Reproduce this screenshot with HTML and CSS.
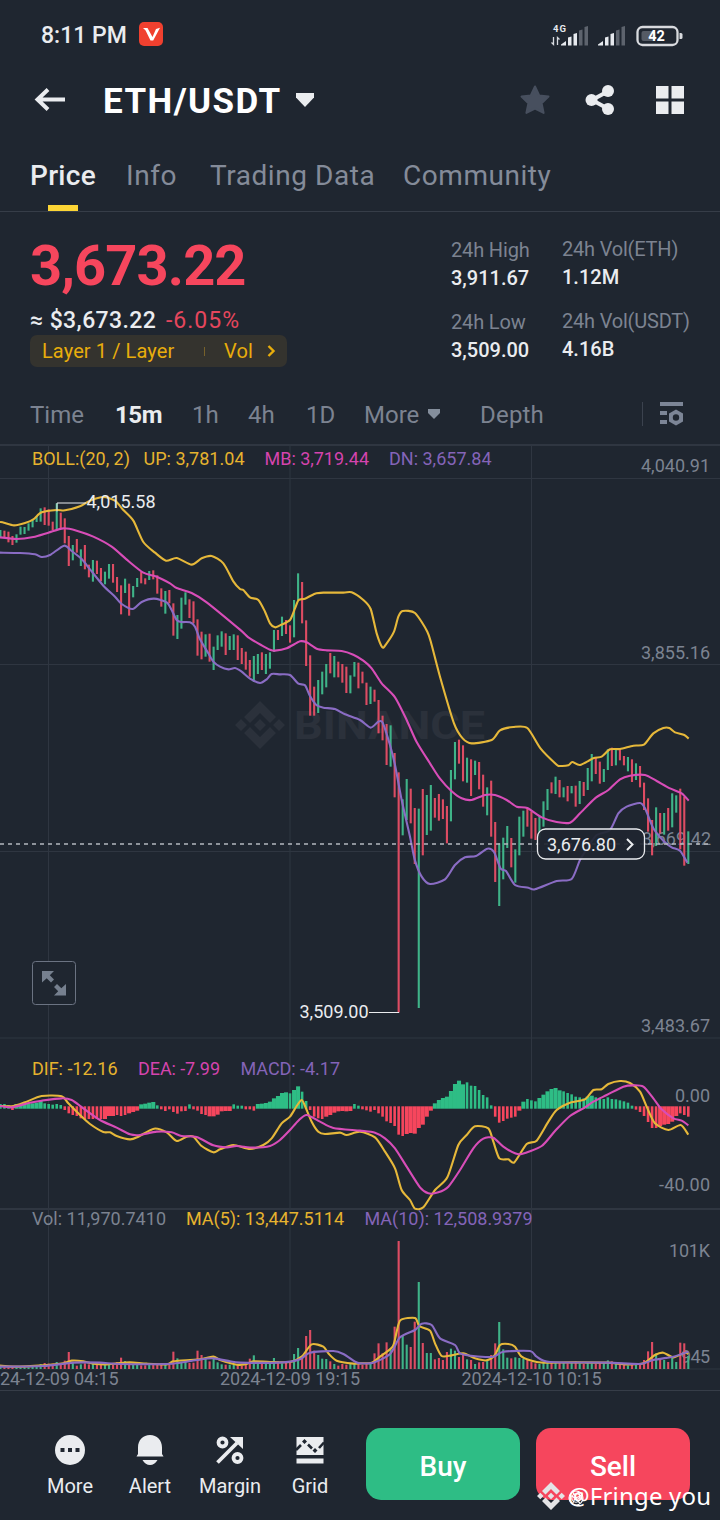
FILE: index.html
```html
<!DOCTYPE html>
<html lang="en">
<head>
    <meta charset="UTF-8">
    <meta name="viewport" content="width=device-width, initial-scale=1.0">
    <title>ETH/USDT</title>
    <link rel="stylesheet" href="styles.css">
</head>
<body>
    <div class="status-bar">
        <span class="clock">8:11 PM</span>
        <svg class="app-badge" width="24" height="24" viewBox="0 0 24 24"><rect width="24" height="24" rx="5" fill="#f0402f"/><path d="M4 6h4.500l5 9L17 7l4-1.300-6.800 12.800h-2.700L6.600 8.500z" fill="#fff"/></svg>
        <svg class="signals" width="136" height="28" viewBox="550 20 136 28">
            <text x="553" y="30.500" font-size="9.500" font-weight="700" fill="#e6e9ee" textLength="13">4G</text>
            <path d="M553.500 36v7.500l-2-2M557.500 44v-7.500l2 2" fill="none" stroke="#d8dbe0" stroke-width="1.300"/>
            <g fill="#e6e9ee"><path d="M561 44.500v-1l5-3.500v4.500zM568 36.500l3.500-1v9H568zM573.500 33l3.500-1v12.500h-3.500z"/><path d="M598 44.500v-1l5-3.500v4.500zM605 36.500l3.500-1v9H605zM610.500 33l3.500-1v12.500h-3.500z"/></g>
            <g fill="#5d636d"><path d="M579 29.500l3.500-1v16H579zM584.500 26l3.500-1v19.500h-3.500z"/><path d="M616 29.500l3.500-1v16H616zM621.500 26l3.500-1v19.500h-3.500z"/></g>
            <rect x="637.500" y="26" width="40" height="18" rx="5" fill="none" stroke="#d8dade" stroke-width="2.300"/>
            <rect x="641.500" y="30" width="14" height="10" rx="2" fill="#555b65"/>
            <path d="M679.500 32h1.500a1.500 1.500 0 0 1 1.500 1.500v3a1.500 1.500 0 0 1-1.500 1.500h-1.500z" fill="#d8dade"/>
            <text x="656.500" y="40" font-size="14.500" font-weight="700" fill="#fff" text-anchor="middle">42</text>
        </svg>
    </div>

    <header class="title-bar">
        <svg class="back" width="32" height="26" viewBox="0 0 32 26"><path d="M14 2.500L3.500 12.500 14 22.500M3 12.500h28" fill="none" stroke="#eaecef" stroke-width="4"/></svg>
        <h1>ETH/USDT</h1>
        <svg class="caret" width="20" height="14" viewBox="0 0 20 14"><path d="M1 0h18v4.500L10 14 1 4.500z" fill="#eaecef"/></svg>
        <svg class="star" width="32" height="32" viewBox="0 0 32 32"><path d="M16 2.500l4.200 9 9.300 1.100-6.900 6.600 2 9.700L16 24.500l-8.600 4.400 2-9.700-6.900-6.600 9.300-1.100z" fill="#474f5e" stroke="#474f5e" stroke-width="2" stroke-linejoin="round"/></svg>
        <svg class="share" width="30" height="30" viewBox="0 0 30 30"><path d="M23.500 6L7 15l16.500 9" fill="none" stroke="#eaecef" stroke-width="4"/><g fill="#eaecef"><circle cx="23" cy="6" r="6"/><circle cx="6.500" cy="15" r="6"/><circle cx="23" cy="24" r="6"/></g></svg>
        <svg class="tiles" width="28" height="28" viewBox="0 0 28 28"><path d="M0 0h12.500v12.500H0zM15.500 0H28v12.500H15.500zM0 15.500h12.500V28H0zM15.500 15.500H28V28H15.500z" fill="#eaecef"/></svg>
    </header>

    <nav class="tabs">
        <a class="tab active">Price</a>
        <a class="tab info">Info</a>
        <a class="tab trading">Trading Data</a>
        <a class="tab community">Community</a>
    </nav>

    <section class="summary">
        <div class="quote">
            <div class="last-price">3,673.22</div>
            <div class="fiat"><span class="usd">≈ $3,673.22</span><span class="change">-6.05%</span></div>
            <div class="tags">
                <span class="layer">Layer 1 / Layer</span><i class="tag-sep"></i><span class="vol">Vol</span>
                <svg width="9" height="12" viewBox="0 0 9 12"><path d="M1.500 1l5 5-5 5" fill="none" stroke="#e8ad0c" stroke-width="2.400"/></svg>
            </div>
        </div>
        <div class="stats">
            <dl><dt>24h High</dt><dd>3,911.67</dd></dl>
            <dl><dt>24h Low</dt><dd>3,509.00</dd></dl>
        </div>
        <div class="stats volumes">
            <dl><dt>24h Vol(ETH)</dt><dd>1.12M</dd></dl>
            <dl><dt>24h Vol(USDT)</dt><dd>4.16B</dd></dl>
        </div>
    </section>

    <nav class="intervals">
        <span class="i-time">Time</span>
        <span class="i-15m active">15m</span>
        <span class="i-1h">1h</span>
        <span class="i-4h">4h</span>
        <span class="i-1d">1D</span>
        <span class="i-more">More</span>
        <svg class="more-caret" width="14" height="11" viewBox="0 0 14 11"><path d="M1 0h12v4L7 10 1 4z" fill="#848e9c"/></svg>
        <span class="i-depth">Depth</span>
        <i class="divider"></i>
        <svg class="settings" width="24" height="24" viewBox="0 0 24 24"><g fill="#7c8596"><path d="M0 0h23v4H0zM0 9h7v4H0zM0 18h7v4H0z"/><path fill-rule="evenodd" d="M16 7.500l7 4v8l-7 4-7-4v-8zM16 12.300a3.200 3.200 0 1 0 0 6.400 3.200 3.200 0 0 0 0-6.400z"/></g></svg>
    </nav>

    <svg class="chart" width="720" height="946" viewBox="0 444 720 946">
        <g class="grid">
            <path d="M0 445H720M0 1209H720" stroke-width="2"/>
            <path d="M0 478.500H720M0 664.500H720M0 851.500H720M0 1038H720M0 1369H720"/>
            <path d="M48.500 444V1369M290 444V1369M531.500 444V1369"/>
        </g>
        <g class="watermark">
            <path d="M260 701l16 16-6 6-10-10-10 10-6-6zM260 749l16-16-6-6-10 10-10-10-6 6zM260 719l6 6-6 6-6-6zM241 719l6 6-6 6-6-6zM279 719l6 6-6 6-6-6z"/>
            <text x="294" y="739" font-size="38" font-weight="700" textLength="191" lengthAdjust="spacingAndGlyphs">BINANCE</text>
        </g>
        <g class="axis" text-anchor="end">
            <text x="710" y="471.500" textLength="69">4,040.91</text>
            <text x="710" y="658.500" textLength="69">3,855.16</text>
            <text x="711" y="845" textLength="69">3,669.42</text>
            <text x="710" y="1031.500" textLength="69">3,483.67</text>
            <text x="710" y="1101.500" textLength="35">0.00</text>
            <text x="710" y="1190.500" textLength="51">-40.00</text>
            <text x="710" y="1256.500" textLength="41">101K</text>
            <text x="710" y="1362.500" textLength="29">945</text>
        </g>
        <g id="plot"></g>
        <path d="M57 511.500v-8.500h29M369 1012.500h30" stroke="#eaecef" fill="none"/>
        <g class="extreme">
            <text x="86.500" y="507.500" textLength="69">4,015.58</text>
            <text x="299.500" y="1018" textLength="69">3,509.00</text>
        </g>
        <g class="legend">
            <text class="yellow" x="32" y="465" textLength="98">BOLL:(20, 2)</text>
            <text class="yellow" x="143.500" y="465" textLength="101">UP: 3,781.04</text>
            <text class="pink" x="264.500" y="465" textLength="104.500">MB: 3,719.44</text>
            <text class="purple" x="389" y="465" textLength="102.500">DN: 3,657.84</text>
            <text class="yellow" x="32" y="1075" textLength="85.500">DIF: -12.16</text>
            <text class="pink" x="138" y="1075" textLength="82">DEA: -7.99</text>
            <text class="purple" x="240.500" y="1075" textLength="99.500">MACD: -4.17</text>
            <text class="grey" x="32" y="1225" textLength="134">Vol: 11,970.7410</text>
            <text class="yellow" x="186" y="1225" textLength="158">MA(5): 13,447.5114</text>
            <text class="purple" x="364.500" y="1225" textLength="168">MA(10): 12,508.9379</text>
            <text class="grey" x="0" y="1385" textLength="118.500">24-12-09 04:15</text>
            <text class="grey" x="220" y="1385" textLength="140">2024-12-09 19:15</text>
            <text class="grey" x="461.500" y="1385" textLength="140">2024-12-10 10:15</text>
        </g>
        <path d="M0 844H712" stroke="#b4b8bf" stroke-width="1.300" stroke-dasharray="4 4"/>
        <rect x="537.500" y="829" width="107" height="30" rx="8" fill="#1f2630" fill-opacity=".93" stroke="#eaecef" stroke-width="1.300"/>
        <text class="mark" x="547" y="851" textLength="69">3,676.80</text>
        <path d="M627 839l5.500 5.500-5.500 5.500" fill="none" stroke="#eaecef" stroke-width="2"/>
        <rect x="32.500" y="961.500" width="43" height="43" rx="3" fill="#1f2630" stroke="#6b7382"/>
        <path d="M42 971h12l-4.200 4.200 4.200 4.300-3 3-4.300-4.200-4.700 4.200zM66 995.500H54l4.200-4.200-4.200-4.300 3-3 4.300 4.200 4.700-4.200z" fill="#76808f"/>
    </svg>

    <footer class="bottom-bar">
        <a class="action">
            <svg width="30" height="30" viewBox="0 0 30 30"><circle cx="15" cy="15" r="15" fill="#eaecef"/><path d="M5.500 13h4v4h-4zM13 13h4v4h-4zM20.500 13h4v4h-4z" fill="#1f2630"/></svg>
            <span>More</span>
        </a>
        <a class="action">
            <svg width="30" height="30" viewBox="0 0 30 30"><path d="M3 19v-6.500C3 5 8 0 15 0s12 5 12 12.500V19l1.500 2.500H1.500zM7.500 25h15c-2 3.300-4.500 5-7.500 5s-5.500-1.700-7.500-5z" fill="#eaecef"/></svg>
            <span>Alert</span>
        </a>
        <a class="action">
            <svg width="30" height="30" viewBox="0 0 30 30"><g fill="none" stroke="#eaecef" stroke-width="3.800"><path d="M2.500 27.500L22 8"/><circle cx="7.500" cy="7.500" r="4"/><circle cx="22.500" cy="23" r="4"/></g><path d="M15 2h13v12z" fill="#eaecef"/></svg>
            <span>Margin</span>
        </a>
        <a class="action">
            <svg width="30" height="30" viewBox="0 0 30 30"><path d="M1.500 2h27v18h-27zM1.500 23.500h27v5h-27z" fill="#eaecef"/><path d="M1 15l5-5M13 9.500l4 4M24 13l5-5.500" fill="none" stroke="#1f2630" stroke-width="2.600"/><path d="M9.500 4l2.500 2.500L9.500 9 7 6.500zM20 13l2.500 2.500L20 18l-2.500-2.500z" fill="#1f2630"/></svg>
            <span>Grid</span>
        </a>
        <button class="trade buy">Buy</button>
        <button class="trade sell">Sell</button>
    </footer>

    <div class="credit">
        <svg width="28" height="28" viewBox="0 0 28 28"><path d="M14 0l9 9-3.500 3.500L14 7l-5.500 5.500L5 9zM14 28l9-9-3.500-3.500L14 21l-5.500-5.500L5 19zM14 10.700l3.300 3.300-3.300 3.300-3.300-3.300zM3.300 10.700L6.600 14l-3.300 3.300L0 14zM24.700 10.700L28 14l-3.300 3.300-3.300-3.300z" fill="#e4e4e6"/></svg>
        <span>@Fringe you</span>
        <svg class="swirl" width="16" height="20" viewBox="0 0 16 20"><g fill="none" stroke="#fff" stroke-width="1.100"><circle cx="8" cy="10" r="7"/><circle cx="8" cy="10" r="4.200"/><path d="M4 16c2-1 1-4 4-6s5-1 6-4M2 8c3-1 5 4 8 3s2-5 0-7M5 4c0 3 3 3 3 6s3 4 4 5"/></g></svg>
    </div>

    <script src="chart.js"></script>
</body>
</html>
```

FILE: styles.css
```css
* {
    box-sizing: border-box;
}

body {
    margin: 0;
    width: 720px;
    height: 1520px;
    background-color: #1f2630;
    color: #eaecef;
    font-family: Roboto, "Liberation Sans", sans-serif;
    position: relative;
    overflow: hidden;
}

svg {
    display: block;
    flex: none;
}

svg text {
    font-family: Roboto, "Liberation Sans", sans-serif;
}

/* status bar */
.status-bar {
    height: 70px;
    padding: 0 34px 0 41px;
    display: flex;
    align-items: center;
}

.clock {
    width: 98px;
    font-size: 23px;
    font-weight: 500;
    white-space: nowrap;
}

.app-badge {
    margin-top: -2px;
}

.signals {
    margin-left: auto;
}

/* title */
.title-bar {
    height: 60px;
    padding: 0 36px 0 34px;
    display: flex;
    align-items: center;
}

.title-bar h1 {
    margin: 2px 0 0 37px;
    width: 192px;
    font-size: 35px;
    font-weight: 700;
    letter-spacing: 1.4px;
    color: #fff;
    white-space: nowrap;
}

.star {
    margin-left: auto;
}

.share {
    margin-left: 34px;
}

.tiles {
    margin-left: 41px;
}

.back,
.star,
.share,
.tiles,
.caret {
    margin-bottom: 1px;
}

/* tabs */
.tabs {
    height: 82px;
    padding-left: 30px;
    display: flex;
    border-bottom: 1px solid #363d48;
}

.tab {
    padding-top: 29px;
    font-size: 28px;
    line-height: 34px;
    letter-spacing: 0.55px;
    color: #848b99;
    white-space: nowrap;
}

.tab.active {
    width: 66px;
    font-weight: 500;
    letter-spacing: 0.3px;
    color: #eaecef;
}

.tab.active::after {
    content: "";
    display: block;
    width: 30px;
    height: 6px;
    margin: 12px auto 0;
    background-color: #fcd535;
}

.info {
    margin-left: 30px;
    width: 54px;
}

.trading {
    margin-left: 30px;
    width: 163px;
}

.community {
    margin-left: 30px;
}

/* price summary */
.summary {
    height: 172px;
    padding-left: 30px;
    display: flex;
}

.quote {
    width: 421px;
}

.last-price {
    margin-top: 23px;
    height: 64px;
    font-size: 56px;
    line-height: 63px;
    font-weight: 700;
    letter-spacing: -0.9px;
    color: #f6465d;
}

.fiat {
    margin-top: 7px;
    height: 29px;
    display: flex;
    font-size: 23px;
    line-height: 29px;
    font-weight: 500;
    letter-spacing: 0.4px;
    white-space: nowrap;
}

.usd {
    width: 136px;
}

.change {
    color: #e5465d;
    font-weight: 400;
    letter-spacing: 1px;
}

.tags {
    width: 257px;
    height: 32px;
    display: flex;
    align-items: center;
    padding-left: 12px;
    border-radius: 7px;
    background-color: #34332e;
    color: #e8ad0c;
    font-size: 20px;
    letter-spacing: 0.1px;
    white-space: nowrap;
}

.layer {
    width: 162px;
}

.tag-sep {
    width: 1px;
    height: 9px;
    margin-right: 19px;
    background-color: #77612a;
}

.vol {
    width: 43px;
}

.stats {
    width: 111px;
    padding-top: 23px;
}

.volumes {
    padding-top: 22px;
}

.stats dl {
    margin: 0;
    height: 72px;
    white-space: nowrap;
}

.stats dt {
    height: 29px;
    font-size: 20px;
    line-height: 30px;
    letter-spacing: -0.15px;
    color: #7c8391;
}

.stats dd {
    margin: 0;
    font-size: 20px;
    line-height: 28px;
    font-weight: 500;
}

.volumes dt {
    letter-spacing: -0.2px;
}

/* intervals */
.intervals {
    height: 60px;
    padding: 2px 0 0 30px;
    display: flex;
    align-items: center;
    font-size: 24px;
    color: #7c8391;
    white-space: nowrap;
}

.intervals .active {
    color: #eaecef;
    font-weight: 700;
    letter-spacing: -0.4px;
}

.i-time {
    width: 85px;
}

.i-15m {
    width: 77px;
}

.i-1h {
    width: 56px;
}

.i-4h {
    width: 58px;
}

.i-1d {
    width: 58px;
}

.i-more {
    width: 63px;
}

.more-caret {
    margin-bottom: 2px;
}

.i-depth {
    margin-left: 39px;
    width: 162px;
    letter-spacing: 0.2px;
}

.divider {
    width: 1px;
    height: 24px;
    margin: 0 17px 2px 0;
    background-color: #3b424e;
}

.settings {
    margin-bottom: 2px;
}

/* chart */
.grid path {
    fill: none;
    stroke: #2f3641;
}

.watermark {
    fill: #2b313b;
}

.axis {
    font-size: 18px;
    fill: #7c8391;
}

.legend,
.extreme,
.mark {
    font-size: 18px;
}

.extreme,
.mark {
    fill: #eaecef;
}

.yellow {
    fill: #e6b32e;
}

.pink {
    fill: #d544ae;
}

.purple {
    fill: #8464b8;
}

.grey {
    fill: #7c8391;
}

.line {
    fill: none;
    stroke-width: 2.1;
    stroke-linejoin: round;
}

/* bottom bar */
.bottom-bar {
    height: 130px;
    border-top: 1px solid #363d48;
    padding: 37px 30px 0 30px;
    display: flex;
}

.action {
    width: 80px;
    padding-top: 7px;
    display: flex;
    flex-direction: column;
    align-items: center;
    font-size: 20px;
    line-height: 24px;
}

.action span {
    margin-top: 9px;
}

.trade {
    width: 154px;
    height: 72px;
    margin-left: 16px;
    padding: 4px 0 0;
    border: none;
    border-radius: 15px;
    color: #fff;
    font-family: inherit;
    font-size: 28px;
    font-weight: 500;
}

.buy {
    background-color: #2ebd85;
}

.sell {
    background-color: #f6465d;
}

.credit {
    position: absolute;
    left: 537px;
    top: 1482px;
    display: flex;
    align-items: center;
    height: 28px;
    color: #fff;
    font-family: "Noto Sans", sans-serif;
    font-size: 24px;
    letter-spacing: 0.2px;
    white-space: nowrap;
}

.credit span {
    margin: -2px 0 0 3px;
}

.swirl {
    position: absolute;
    left: 31px;
    top: 6px;
}
```

FILE: chart.js
```js
const GREEN = '#3fb388';
const RED = '#dd4c63';
const STEP = 4.0228;
const plot = document.getElementById('plot');

function barX(i) {
    return 0.4 + i * STEP;
}

function add(tag, attrs) {
    const el = document.createElementNS('http://www.w3.org/2000/svg', tag);
    for (const key in attrs) el.setAttribute(key, attrs[key]);
    plot.appendChild(el);
}

function bar(i, top, bottom, width, color) {
    add('rect', { x: barX(i) - width / 2, y: top, width: width, height: Math.max(bottom - top, 1), fill: color });
}

// every series is kept in chunks: [x origin, y origin, values in thirds of a pixel]
function line(cls, color, chunks) {
    const pts = [];
    chunks.forEach(([ox, oy, text]) => {
        text.split(' ').forEach(p => {
            const [x, y] = p.split(',').map(Number);
            pts.push([ox + x / 3, oy + y / 3]);
        });
    });
    // Catmull-Rom spline through the points
    let d = 'M' + pts[0];
    for (let i = 0; i < pts.length - 1; i++) {
        const a = pts[Math.max(i - 1, 0)], b = pts[i], c = pts[i + 1], e = pts[Math.min(i + 2, pts.length - 1)];
        d += `C${b[0] + (c[0] - a[0]) / 8} ${b[1] + (c[1] - a[1]) / 8} ${c[0] - (e[0] - b[0]) / 8} ${c[1] - (e[1] - b[1]) / 8} ${c[0]} ${c[1]}`;
    }
    add('path', { class: cls, stroke: color, d: d });
}

// candles: colour, high-low
const candles = [
    [440, 'g270-292 r272-292 r275-307 r288-315 g283-308 g260-284 g261-282 g250-272 g240-262 g228-246 g205-245 r202-255 r208-257 r245-270 g190-268 r218-264 r235-310 r288-378 g315-361 r297-338 g328-378 r315-388 r374-412 g360-425 r362-402 r384-424 g395-433 g372-416 r372-428 r411-456 r436-523 g416-459 r431-527 g438-472 g414-441 r396-430 r415-433 g393-420 r391-418 r406-461 r445-500 g453-521 r450-490 r490-587 g525-597 g473-566 g457-494 r478-534 r484-550 r538-647 r575-658 g583-650 r581-665 g620-690 g586-630 g574-620 r580-645 g588-630 g583-630'],
    [560, 'r226-300 r264-312 r275-329 r300-350 g288-366 g282-342 r277-330 g282-342 g277-326 g210-276 r210-240 g170-228 r180-222 r196-248 g120-232 g40-120 r66-190 r181-318 r286-467 r380-467 g360-459 g335-403 g312-382 r279-340 g288-352 r305-352 r312-368 r320-399 g346-400 g306-350 r308-385 r335-370 r368-435 g380-432 r389-425 r420-520 r467-541 r492-615 g496-620 r579-712 r637-1358 g718-826 g657-780 r686-790 r744-912 g746-1344 r687-886 g705-825 g675-812 r714-773 r702-782'],
    [580, 'r658-717 r678-790 g570-724 g486-598 r479-551 r496-604 g533-608 r538-648 g542-585 r546-628 r584-680 g622-706 r602-770 r726-906 g790-978 g773-898 g738-804 r774-862 g808-908 g710-826 g692-770 r684-740 r694-776 r714-780 g710-775 g664-740 g627-690 r607-640 g590-642 r600-652 g622-652 r618-664 g618-640 r617-680 g603-672 r606-648 g564-630 g522-604 r534-582 r545-611 g567-606 g508-570 r503-558 g508-556 r506-541 r528-556 g531-574 r538-606 g550-600 r558-622 r608-690 r655-755 r720-826 g682-798 r699-760 g699-764 r684-752 g640-742 g646-698 r626-808 r650-857 g754-852']
];

const colors = [];
candles.forEach(([oy, text]) => {
    text.split(' ').forEach(c => {
        const color = c[0] === 'g' ? GREEN : RED;
        const [high, low] = c.slice(1).split('-').map(Number);
        bar(colors.length, oy + high / 3, oy + low / 3, 2.1, color);
        colors.push(color);
    });
});

// Bollinger bands
line('line', '#e6b83a', [
    [0, 440, '0,246 12,248 42,256 75,249 100,238 125,217 170,210 195,211 240,199 270,182 310,171 345,182 370,210 400,242 430,306 465,338 498,362 530,354 575,374 605,355 635,348 670,370 700,424'],
    [200, 560, '120,87 130,90 150,112 175,120 195,155 210,190 225,202 240,196 270,180 285,145 296,120 315,116 345,101 370,98 430,98 455,97 490,120 512,147 530,220 547,262'],
    [380, 580, '18,193 42,155 55,110 68,93 105,99 142,155 155,195 180,290 222,430 248,475 275,490 335,480 360,451 400,441 442,444 482,506 530,554 540,558 565,556 577,546 600,555 640,535 665,530 690,508 720,507 760,497 792,494 820,460 850,444 868,444 885,457 913,465 926,476']
]);
line('line', '#d84db8', [
    [0, 440, '0,292 50,297 100,291 145,278 190,265 230,272 280,290 335,320 385,363 430,398 470,410 510,430 530,444 575,459 620,487'],
    [200, 560, '120,209 145,232 185,256 210,269 225,272 260,265 300,244 320,247 350,266 380,271 425,273 460,284 490,302 515,325 545,370 585,412 620,480 650,546 690,610'],
    [380, 580, '180,596 215,634 245,655 275,660 315,645 345,645 380,660 410,680 442,684 485,712 530,726 570,728 600,700 645,655 685,630 720,598 750,587 795,585 830,603 870,625 905,640 926,662']
]);
line('line', '#8a6cc4', [
    [0, 440, '0,338 60,339 105,343 125,351 150,345 192,317 215,333 245,357 270,388 310,437 345,470 365,492 398,507 425,486 462,476 500,487 515,510 530,540 545,546 570,547 585,560 600,598 625,640 640,665 660,680 685,688 705,684'],
    [200, 560, '125,335 150,356 180,369 200,358 215,342 240,343 270,345 295,371 315,376 330,408 350,436 370,443 405,447 435,463 480,480 512,503 535,485 548,488 570,555 585,615 605,720 630,830'],
    [380, 580, '104,838 125,890 150,912 195,898 225,855 255,832 288,828 322,806 342,816 362,866 378,873 405,915 445,923 465,928 530,903 575,897 600,840 625,800 650,765 690,750 715,700 740,680 780,669 795,685 820,745 850,782 875,802 900,812 922,848']
]);

// MACD histogram, values under 622 are above the zero line
const macd = [612, 612, 615, 630, 612, 612, 612, 612, 610, 608, 603, 610, 612, 614, 612, 615, 630, 640, 645, 648, 655, 657, 657, 657, 657, 657, 657, 648, 648, 645, 648, 645, 640, 636, 632, 613, 611, 608, 606, 616, 628, 633, 628, 636, 641, 634, 633, 613, 628, 632, 642, 645, 649, 649, 644, 634, 633, 633, 613, 617, 617, 628, 628, 632, 612, 611, 609, 605, 595, 588, 579, 577, 580, 570, 559, 575, 603, 630, 650, 655, 657, 650, 645, 638, 634, 633, 634, 633, 612, 617, 628, 631, 635, 630, 640, 650, 664, 669, 678, 704, 708, 702, 699, 701, 684, 674, 650, 632, 610, 600, 594, 590, 573, 552, 542, 553, 547, 557, 558, 570, 585, 592, 616, 650, 668, 663, 656, 653, 650, 632, 605, 597, 601, 604, 594, 584, 574, 567, 564, 571, 574, 579, 583, 590, 592, 595, 590, 587, 592, 597, 597, 592, 597, 598, 601, 604, 608, 617, 629, 636, 648, 666, 684, 684, 678, 674, 672, 665, 648, 640, 645, 650];
// ranges where neighbouring bars touch
const solid = [[4, 10], [26, 28], [32, 38], [52, 57], [64, 71], [73, 74], [81, 87], [101, 115], [129, 130], [134, 139], [146, 147], [164, 168]];

macd.forEach((v, i) => {
    const wide = solid.some(([a, b]) => i >= a && i <= b);
    const width = wide ? 4.05 : 2.6;
    if (v < 622) bar(i, 900 + v / 3, 1108.7, width, '#2ebd85');
    else bar(i, 1106.3, 900 + v / 3, width, '#f6465d');
});

line('line', '#e6b83a', [
    [0, 900, '0,618 40,618 75,607 125,588 185,589 205,610 240,645 270,672 310,696 330,697 350,708 390,718 415,710 462,686 500,697 530,723 560,710 580,710 605,738 640,757 660,748 700,735 750,747 790,735 815,715 845,670 870,650 890,618 905,600 915,618 935,665 955,695 975,702 1020,698 1040,705'],
    [360, 900, '0,695 45,712 75,755 105,805 125,870 150,900 165,926 190,922 225,870 262,832 295,735 320,705 345,679 385,685 400,725 418,775 445,778 463,787 500,732 530,722 565,665 590,630 630,608 675,598 700,570 725,568 745,552 780,543 810,549 840,575 860,620 885,670 925,690 962,675 985,704']
]);
line('line', '#d84db8', [
    [0, 900, '0,618 35,622 90,608 125,602 185,595 215,600 250,625 300,660 350,683 390,703 420,705 470,695 515,697 545,708 590,711 640,736 680,742 710,738 760,743 810,738 840,720 870,690 895,662 920,645 960,665 1000,684'],
    [360, 900, '0,692 45,698 75,715 105,745 140,800 180,862 205,880 235,877 265,860 300,810 340,745 370,716 400,713 430,740 465,760 485,762 545,738 585,693 630,648 675,622 700,605 740,585 790,560 820,556 850,560 880,595 905,628 940,655 965,662 985,676']
]);

// volume bars share the candle colours
const volume = [501, 502, 502, 502, 503, 503, 502, 502, 500, 499, 492, 489, 491, 491, 486, 493, 482, 456, 486, 497, 493, 490, 493, 490, 490, 492, 493, 493, 495, 486, 473, 483, 487, 494, 492, 496, 496, 494, 495, 494, 493, 494, 494, 455, 475, 486, 486, 489, 488, 452, 465, 473, 484, 468, 487, 493, 494, 494, 495, 497, 498, 486, 476, 466, 484, 492, 492, 488, 474, 484, 490, 488, 489, 462, 444, 468, 408, 390, 452, 465, 476, 477, 484, 492, 497, 492, 494, 492, 492, 492, 494, 492, 490, 460, 430, 460, 427, 448, 380, 123, 408, 434, 441, 365, 246, 429, 459, 459, 478, 474, 480, 456, 446, 452, 471, 465, 478, 480, 492, 487, 486, 480, 465, 430, 366, 448, 473, 475, 472, 474, 476, 479, 486, 490, 492, 488, 488, 488, 487, 486, 488, 490, 486, 484, 490, 492, 489, 490, 491, 488, 486, 481, 484, 488, 492, 493, 496, 492, 494, 490, 480, 454, 426, 460, 478, 480, 486, 472, 486, 428, 430, 468];
volume.forEach((v, i) => bar(i, 1200 + v / 3, 1369, 2.1, colors[i]));

line('line', '#e6b83a', [
    [0, 1200, '0,497 40,500 130,496 190,490 215,482 250,484 280,491 320,493 350,490 390,487 440,491 500,493 520,484 570,480 600,478 640,470 660,480 710,494 740,492 760,484 810,486 870,486 905,470 935,433 970,440 985,460 1010,482 1060,491'],
    [360, 1200, '0,490 35,488 60,470 98,440 110,395 122,360 165,354 178,378 210,392 225,430 245,468 275,466 310,460 345,475 380,481 405,465 420,435 445,432 465,440 485,470 530,486 570,488 640,487 740,488 800,493 850,490 885,465 910,458 940,472 975,458 985,462']
]);
line('line', '#8a6cc4', [
    [0, 1200, '0,500 130,498 220,488 300,488 360,492 500,492 540,488 590,480 640,475 690,484 720,488 850,487 900,478 930,458 1000,453 1030,462 1065,485'],
    [360, 1200, '0,490 40,488 90,462 120,412 165,390 185,371 215,375 240,415 285,435 300,460 340,468 400,470 430,455 510,453 530,470 570,486 740,488 840,492 880,480 940,470 965,462 985,455']
]);
```
